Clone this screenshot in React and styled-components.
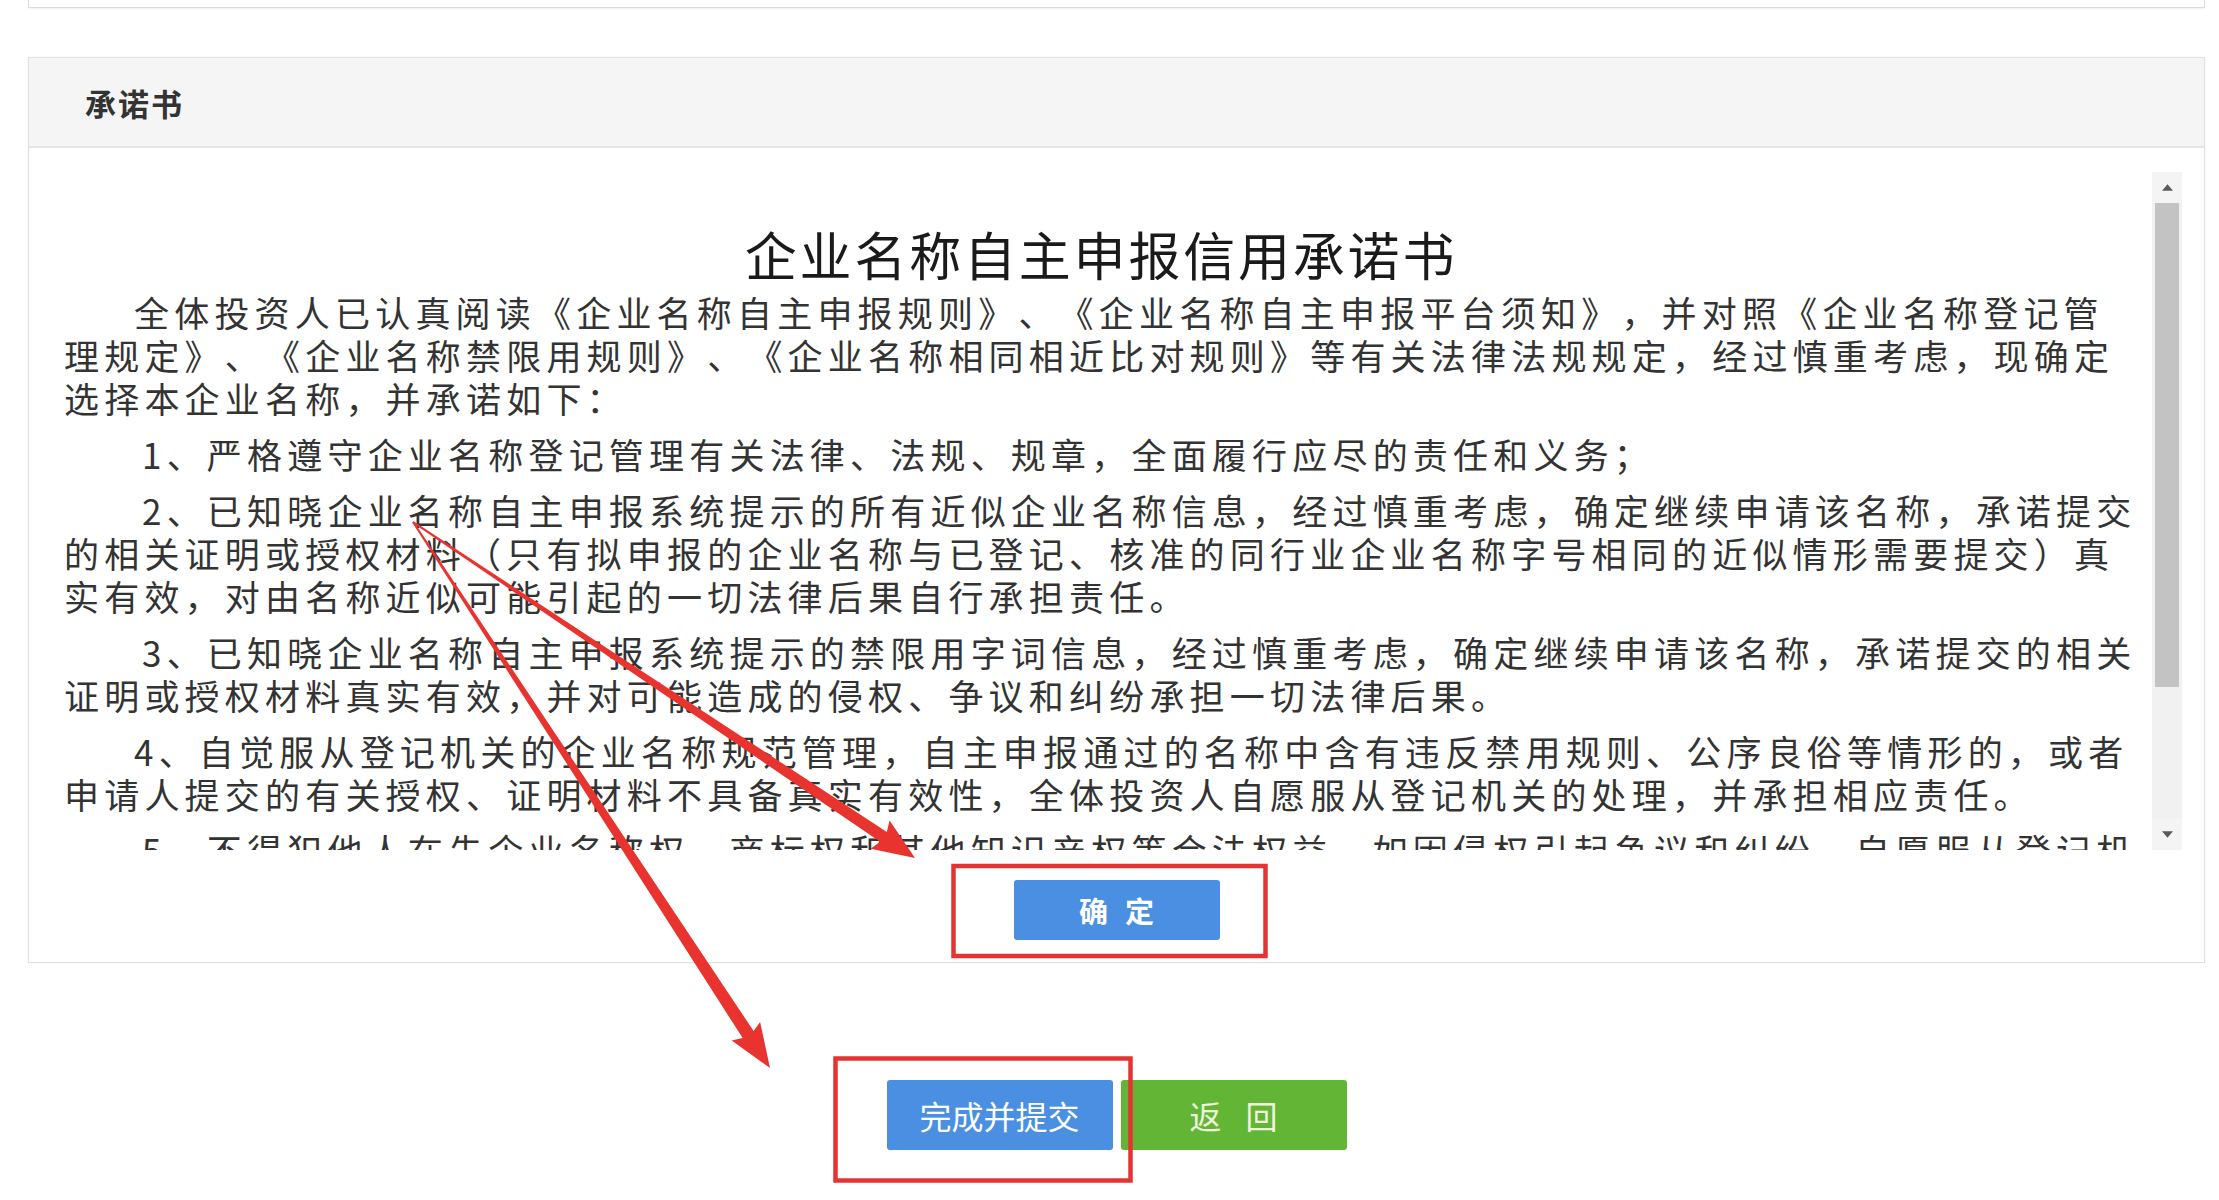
import React from 'react';
import styled, {createGlobalStyle} from 'styled-components';

const GlobalStyle = createGlobalStyle`
  html, body {
    margin: 0;
    padding: 0;
    background: #fff;
  }
  body {
    font-family: "Noto Sans CJK SC", "Noto Sans", sans-serif;
    color: #333;
  }
`;

const Page = styled.div`
  position: relative;
  width: 2219px;
  height: 1200px;
  box-sizing: border-box;
  padding: 0 14px 0 28px;
  overflow: hidden;
`;

const PrevPanelEdge = styled.div`
  height: 7px;
  border: 1px solid #dcdcdc;
  border-top: none;
  box-shadow: 0 1px 2px rgba(0, 0, 0, 0.06);
`;

const Panel = styled.section`
  margin-top: 49px;
  border: 1px solid #e0e0e0;
  box-shadow: 0 0 2px rgba(0, 0, 0, 0.05);
  background: #fff;
`;

const PanelHeader = styled.div`
  height: 88px;
  display: flex;
  align-items: center;
  padding-left: 56px;
  background: #f5f5f6;
  border-bottom: 2px solid #e6e6e6;
  font-size: 31px;
  font-weight: 700;
  letter-spacing: 2px;
  color: #333;
`;

const PanelBody = styled.div`
  display: flex;
  flex-direction: column;
  padding: 24px 22px 22px 22px;
`;

const ScrollBox = styled.div`
  display: flex;
  height: 678px;
`;

const Letter = styled.div`
  flex: 1;
  min-width: 0;
  overflow: hidden;
  padding: 52px 14px 0 13px;
  text-spacing-trim: space-all;
`;

const LetterTitle = styled.h1`
  margin: 0 0 6px;
  text-align: center;
  font-size: 52px;
  font-weight: 400;
  line-height: 60px;
  letter-spacing: 2.8px;
  color: #1a1a1a;
`;

const Para = styled.div`
  margin-bottom: 13px;
  font-size: 35px;
  line-height: 43px;
  letter-spacing: 5.2px;
  color: #333;
  white-space: nowrap;
`;

const Line = styled.div`
  padding-left: ${({$indent}) => $indent || 0}px;
`;

const ScrollTrack = styled.div`
  width: 30px;
  flex-shrink: 0;
  display: flex;
  flex-direction: column;
  background: #f1f1f1;
`;

const ScrollArrow = styled.div`
  height: 31px;
  display: flex;
  align-items: center;
  justify-content: center;
  background: #f4f4f4;
  color: #5a5a5a;
`;

const ScrollThumb = styled.div`
  height: 484px;
  margin: 0 3px;
  background: #c3c3c3;
`;

const ScrollRest = styled.div`
  flex: 1;
`;

const ConfirmRow = styled.div`
  display: flex;
  justify-content: center;
  margin-top: 30px;
`;

const Button = styled.button`
  border: none;
  border-radius: 3px;
  padding: 0;
  display: flex;
  align-items: center;
  justify-content: center;
  font-family: "Noto Sans CJK SC", "Noto Sans", sans-serif;
  width: ${({$w}) => $w}px;
  height: ${({$h}) => $h}px;
  background: ${({$green}) => ($green ? '#62b535' : '#4a8fe2')};
  color: ${({$green}) => ($green ? '#eef7dc' : '#fff')};
  font-size: ${({$size}) => $size}px;
  font-weight: ${({$bold}) => ($bold ? 700 : 400)};
  letter-spacing: ${({$spacing}) => $spacing || 0}px;
  text-indent: ${({$spacing}) => $spacing || 0}px;
`;

const Footer = styled.div`
  display: flex;
  justify-content: center;
  gap: 8px;
  margin-top: 117px;
`;

const Overlay = styled.svg`
  position: absolute;
  left: 0;
  top: 0;
  width: 2219px;
  height: 1200px;
  pointer-events: none;
`;

const paragraphs = [
  {
    indent: 70,
    lines: [
      '全体投资人已认真阅读《企业名称自主申报规则》、《企业名称自主申报平台须知》，并对照《企业名称登记管',
      '理规定》、《企业名称禁限用规则》、《企业名称相同相近比对规则》等有关法律法规规定，经过慎重考虑，现确定',
      '选择本企业名称，并承诺如下：',
    ],
  },
  {
    indent: 78,
    lines: ['1、严格遵守企业名称登记管理有关法律、法规、规章，全面履行应尽的责任和义务；'],
  },
  {
    indent: 78,
    lines: [
      '2、已知晓企业名称自主申报系统提示的所有近似企业名称信息，经过慎重考虑，确定继续申请该名称，承诺提交',
      '的相关证明或授权材料（只有拟申报的企业名称与已登记、核准的同行业企业名称字号相同的近似情形需要提交）真',
      '实有效，对由名称近似可能引起的一切法律后果自行承担责任。',
    ],
  },
  {
    indent: 78,
    lines: [
      '3、已知晓企业名称自主申报系统提示的禁限用字词信息，经过慎重考虑，确定继续申请该名称，承诺提交的相关',
      '证明或授权材料真实有效，并对可能造成的侵权、争议和纠纷承担一切法律后果。',
    ],
  },
  {
    indent: 70,
    lines: [
      '4、自觉服从登记机关的企业名称规范管理，自主申报通过的名称中含有违反禁用规则、公序良俗等情形的，或者',
      '申请人提交的有关授权、证明材料不具备真实有效性，全体投资人自愿服从登记机关的处理，并承担相应责任。',
    ],
  },
  {
    indent: 78,
    lines: [
      '5、不得犯他人在先企业名称权、商标权和其他知识产权等合法权益，如因侵权引起争议和纠纷，自愿服从登记机',
      '关的处理，并承担相应法律责任。',
    ],
  },
];

// tapered annotation arrow, like the ones a screenshot tool draws
const arrowPoints = (sx, sy, tx, ty, w0, w1, head, half) => {
  const len = Math.hypot(tx - sx, ty - sy);
  const ux = (tx - sx) / len;
  const uy = (ty - sy) / len;
  const nx = -uy;
  const ny = ux;
  const bx = tx - ux * head;
  const by = ty - uy * head;
  const pts = [
    [sx + nx * w0, sy + ny * w0],
    [bx + nx * w1, by + ny * w1],
    [bx + nx * half - ux * 4, by + ny * half - uy * 4],
    [tx, ty],
    [bx - nx * half - ux * 4, by - ny * half - uy * 4],
    [bx - nx * w1, by - ny * w1],
    [sx - nx * w0, sy - ny * w0],
  ];
  return pts.map(p => p.map(v => v.toFixed(1)).join(',')).join(' ');
};

const Annotations = () => (
  <Overlay viewBox="0 0 2219 1200">
    <g fill="none" stroke="#e53333" strokeWidth="4.5">
      <rect x="953.5" y="866" width="312" height="90"/>
      <rect x="835.5" y="1058.5" width="295" height="122"/>
    </g>
    <g fill="#e8332f">
      <polygon points={arrowPoints(413, 522, 915, 858, 1, 6, 38, 17)}/>
      <polygon points={arrowPoints(413, 522, 770, 1068, 1, 6.5, 40, 17)}/>
    </g>
  </Overlay>
);

const ScrollBar = () => (
  <ScrollTrack>
    <ScrollArrow>
      <svg width="11" height="7" viewBox="0 0 10 6"><path d="M0 6 L5 0 L10 6 Z" fill="currentColor"/></svg>
    </ScrollArrow>
    <ScrollThumb/>
    <ScrollRest/>
    <ScrollArrow>
      <svg width="11" height="7" viewBox="0 0 10 6"><path d="M0 0 L10 0 L5 6 Z" fill="currentColor"/></svg>
    </ScrollArrow>
  </ScrollTrack>
);

const App = () => (
  <Page>
    <GlobalStyle/>
    <PrevPanelEdge/>
    <Panel>
      <PanelHeader>承诺书</PanelHeader>
      <PanelBody>
        <ScrollBox>
          <Letter>
            <LetterTitle>企业名称自主申报信用承诺书</LetterTitle>
            {paragraphs.map((p, i) =>
              <Para key={i}>
                {p.lines.map((line, j) =>
                  <Line key={j} $indent={j === 0 ? p.indent : 0}>{line}</Line>
                )}
              </Para>
            )}
          </Letter>
          <ScrollBar/>
        </ScrollBox>
        <ConfirmRow>
          <Button $w={206} $h={60} $size={29} $bold $spacing={17}>确定</Button>
        </ConfirmRow>
      </PanelBody>
    </Panel>
    <Footer>
      <Button $w={226} $h={70} $size={32}>完成并提交</Button>
      <Button $w={226} $h={70} $size={32} $green $spacing={24}>返回</Button>
    </Footer>
    <Annotations/>
  </Page>
);

export default App;
